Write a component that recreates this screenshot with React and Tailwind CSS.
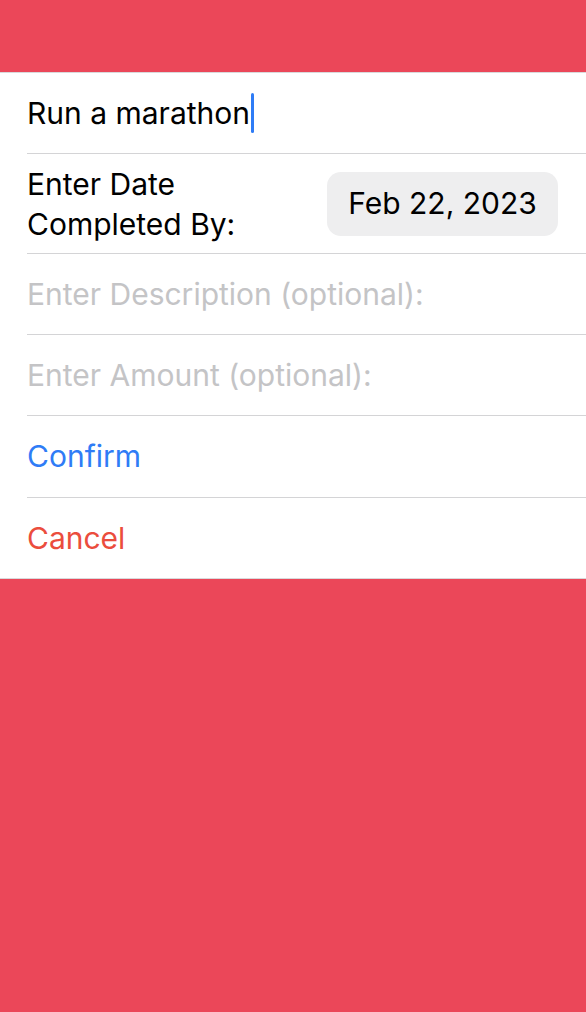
import React from 'react';

function Row({ children, className = '', last = false }) {
  return (
    <div className={`ml-[27px] flex items-center ${last ? '' : 'border-b border-[#d4d4d6]'} ${className}`}>
      {children}
    </div>
  );
}

export default function App() {
  return (
    <div className="min-h-[1012px] bg-[#eb4759] pt-[72px] font-['Inter','Noto_Sans',sans-serif]">
      {/* Form card */}
      <div className="border-y border-[#d9d9db] bg-white text-[30px]">
        <Row className="h-[81px]">
          <span className="text-black">Run a marathon</span>
          <span className="ml-[1px] h-[40px] w-[3px] rounded-full bg-[#2f7cf6]" />
        </Row>
        <Row className="h-[100px] justify-between pr-[28px]">
          <div className="leading-[40px] text-black">
            Enter Date
            <br />
            Completed By:
          </div>
          <div className="flex h-[64px] w-[231px] items-center justify-center rounded-[14px] bg-[#eeeeef] text-black">
            Feb 22, 2023
          </div>
        </Row>
        <Row className="h-[81px]">
          <span className="text-[#c4c4c6]">Enter Description (optional):</span>
        </Row>
        <Row className="h-[81px]">
          <span className="text-[#c4c4c6]">Enter Amount (optional):</span>
        </Row>
        <Row className="h-[82px]">
          <span className="text-[#2f7cf6]">Confirm</span>
        </Row>
        <Row className="h-[80px]" last>
          <span className="text-[#eb4d3d]">Cancel</span>
        </Row>
      </div>
    </div>
  );
}
